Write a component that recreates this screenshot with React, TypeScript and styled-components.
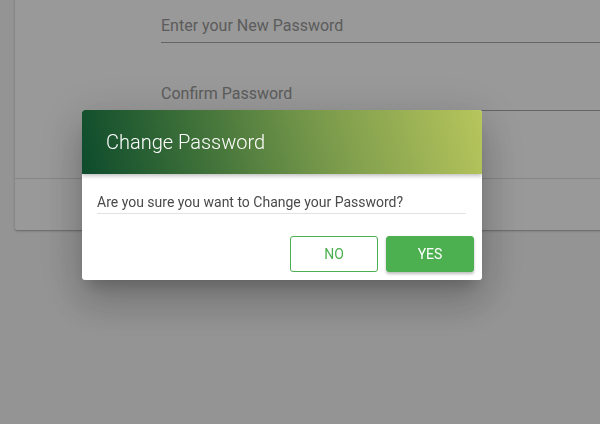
import React from "react";
import styled, {createGlobalStyle} from "styled-components";

const GlobalStyle = createGlobalStyle`
    html, body {
        margin: 0;
        padding: 0;
        height: 100%;
        background: #f7f7f7;
        font-family: Roboto, 'Liberation Sans', sans-serif;
        overflow: hidden;
    }
`;

const Page = styled.div`
    display: flex;
    padding-left: 15px;
    height: 424px;
    overflow: hidden;
`;

const Card = styled.div`
    display: flex;
    flex-direction: column;
    flex: none;
    width: 640px;
    height: 240px;
    margin-top: -10px;
    background: #fff;
    border-radius: 2px;
    box-shadow: 0 1px 3px rgba(0, 0, 0, 0.2), 0 1px 1px rgba(0, 0, 0, 0.14);
`;

const Form = styled.div`
    display: flex;
    flex-direction: column;
    gap: 34px;
    padding: 19px 0 0 146px;
    height: 189px;
    box-sizing: border-box;
    border-bottom: 1px solid #e0e0e0;
`;

const Field = styled.div`
    display: flex;
    align-items: center;
    height: 33px;
    border-bottom: 1px solid #a8a8a8;
    font-size: 16px;
    color: #9a9a9a;
`;

const Backdrop = styled.div`
    position: fixed;
    inset: 0;
    background: rgba(0, 0, 0, 0.4);
    display: flex;
    align-items: flex-start;
    padding: 110px 0 0 82px;
`;

const Dialog = styled.div`
    display: flex;
    flex-direction: column;
    width: 400px;
    background: #fff;
    border-radius: 3px;
    overflow: hidden;
    box-shadow: 0 11px 15px -7px rgba(0, 0, 0, 0.2),
        0 24px 38px 3px rgba(0, 0, 0, 0.14),
        0 9px 46px 8px rgba(0, 0, 0, 0.12);
`;

const Header = styled.div`
    display: flex;
    align-items: center;
    height: 64px;
    padding: 0 24px;
    background: linear-gradient(75deg, #0d4b2c 0%, #3f7139 30%, #7c9c4c 62%, #b7c55c 100%);
    box-shadow: 0 2px 4px rgba(0, 0, 0, 0.25);
    position: relative;
    z-index: 1;
`;

const Title = styled.h2`
    margin: 0;
    font-size: 20px;
    font-weight: 300;
    color: #fff;
`;

const Content = styled.div`
    padding: 20px 16px 0 15px;
`;

const Message = styled.p`
    margin: 0;
    padding-bottom: 3px;
    font-size: 14px;
    line-height: 16px;
    color: #4a4a4a;
    border-bottom: 1px solid #e2e2e2;
`;

const Actions = styled.div`
    display: flex;
    justify-content: flex-end;
    gap: 8px;
    padding: 22px 8px 8px;
`;

const Button = styled.button<{$primary?: boolean}>`
    width: 88px;
    height: 36px;
    border-radius: 3px;
    font-family: Roboto, 'Liberation Sans', sans-serif;
    font-size: 14px;
    text-transform: uppercase;
    cursor: pointer;
    border: 1px solid #4caf50;
    background: ${p => (p.$primary ? "#4caf50" : "#fff")};
    color: ${p => (p.$primary ? "#fff" : "#4caf50")};
    box-shadow: ${p => (p.$primary ? "0 2px 3px rgba(0, 0, 0, 0.26)" : "none")};
`;

const App = () => {
    return (
        <>
            <GlobalStyle/>
            <Page>
                <Card>
                    <Form>
                        <Field>Enter your New Password</Field>
                        <Field>Confirm Password</Field>
                    </Form>
                </Card>
            </Page>
            <Backdrop>
                <Dialog>
                    <Header>
                        <Title>Change Password</Title>
                    </Header>
                    <Content>
                        <Message>Are you sure you want to Change your Password?</Message>
                    </Content>
                    <Actions>
                        <Button>No</Button>
                        <Button $primary>Yes</Button>
                    </Actions>
                </Dialog>
            </Backdrop>
        </>
    );
};

export default App;
